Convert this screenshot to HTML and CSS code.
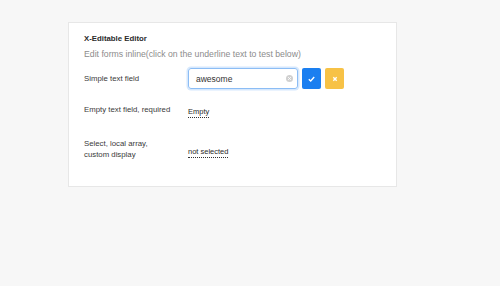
FILE: index.html
```html
<!DOCTYPE html>
<html>
<head>
<meta charset="utf-8">
<link rel="stylesheet" href="styles.css">
</head>
<body>
<div class="card">
  <div class="title">X-Editable Editor</div>
  <div class="subtitle">Edit forms inline(click on the underline text to test below)</div>

  <div class="row row-input">
    <div class="label">Simple text field</div>
    <div class="editor">
      <div class="input">
        <span class="input-text">awesome</span>
        <span class="clear">
          <svg width="7" height="7" viewBox="0 0 7 7"><circle cx="3.5" cy="3.5" r="3.5" fill="#d0d0d0"/><path d="M2.2 2.2L4.8 4.8M4.8 2.2L2.2 4.8" stroke="#fff" stroke-width="1"/></svg>
        </span>
      </div>
      <button class="btn btn-ok">
        <svg width="7" height="6" viewBox="0 0 7 6"><path d="M0.8 3.2L2.7 4.9L6.2 1" fill="none" stroke="#fff" stroke-width="1.4"/></svg>
      </button>
      <button class="btn btn-cancel">
        <svg width="6" height="6" viewBox="0 0 6 6"><path d="M1.3 1.3L4.7 4.7M4.7 1.3L1.3 4.7" stroke="#fff" stroke-width="1.4"/></svg>
      </button>
    </div>
  </div>

  <div class="row row-empty">
    <div class="label">Empty text field, required</div>
    <a class="editable editable-empty">Empty</a>
  </div>

  <div class="row row-select">
    <div class="label">Select, local array,<br>custom display</div>
    <a class="editable editable-select">not selected</a>
  </div>
</div>
</body>
</html>
```
FILE: styles.css
```css
html, body {
  margin: 0;
  padding: 0;
}
body {
  background: #f7f7f7;
  font-family: "Liberation Sans", Arial, sans-serif;
  color: #3a3a3a;
  width: 500px;
  height: 286px;
}
.card {
  box-sizing: border-box;
  margin: 22px 0 0 68px;
  width: 329px;
  height: 165px;
  background: #fff;
  border: 1px solid #e7e7e7;
  padding: 10px 15px 0 15px;
}
.title {
  font-size: 7.8px;
  line-height: 12px;
  font-weight: bold;
  color: #2a2a2a;
}
.subtitle {
  font-size: 8.7px;
  line-height: 13px;
  margin-top: 3px;
  color: #8c8c8c;
}
.row {
  display: flex;
}
.label {
  width: 104px;
  flex: none;
  font-size: 7.8px;
  color: #3a3a3a;
}
.row-input {
  margin-top: 7px;
  height: 21px;
  align-items: center;
}
.row-input .label {
  line-height: 12px;
}
.editor {
  display: flex;
  align-items: center;
  gap: 4px;
}
.input {
  box-sizing: border-box;
  width: 110px;
  height: 21px;
  border: 1px solid #8cbdf5;
  border-radius: 3px;
  box-shadow: 0 0 0 1.5px #d6e8fd;
  display: flex;
  align-items: center;
  padding: 0 4px 0 7px;
}
.input-text {
  flex: 1;
  font-size: 8.5px;
  color: #333;
}
.clear {
  display: flex;
}
.btn {
  width: 19px;
  height: 21px;
  border: none;
  border-radius: 2px;
  padding: 0;
  display: flex;
  align-items: center;
  justify-content: center;
}
.btn-ok {
  background: #1b7ff0;
}
.btn-cancel {
  background: #f7c246;
}
.row-empty {
  margin-top: 15px;
  align-items: flex-start;
}
.row-empty .label {
  line-height: 12px;
}
.row-select {
  margin-top: 20px;
  align-items: flex-start;
}
.row-select .label {
  line-height: 11px;
}
.editable {
  font-size: 7.5px;
  line-height: 10px;
  color: #2a2a2a;
  border-bottom: 1px dotted #333;
  text-decoration: none;
}
.editable-empty {
  margin-top: 3px;
}
.editable-select {
  margin-top: 9px;
}
```
